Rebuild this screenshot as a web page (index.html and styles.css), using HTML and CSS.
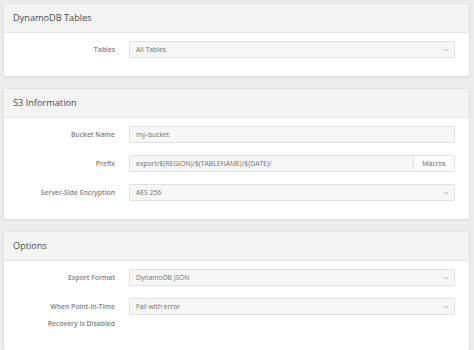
FILE: index.html
```html
<!DOCTYPE html>
<html>
<head>
<meta charset="utf-8">
<link rel="stylesheet" href="styles.css">
</head>
<body>
<div class="page">
  <section class="card">
    <div class="card-head">DynamoDB Tables</div>
    <div class="card-body">
      <div class="row">
        <label class="lbl">Tables</label>
        <div class="field select"><span>All Tables</span><svg class="chev" viewBox="0 0 8 5"><path d="M1 1l3 3 3-3" fill="none" stroke="#999" stroke-width="1"/></svg></div>
      </div>
    </div>
  </section>

  <section class="card">
    <div class="card-head">S3 Information</div>
    <div class="card-body">
      <div class="row">
        <label class="lbl">Bucket Name</label>
        <div class="field"><span>my-bucket</span></div>
      </div>
      <div class="row">
        <label class="lbl">Prefix</label>
        <div class="group">
          <div class="field grow"><span>export/$(REGION)/$(TABLENAME)/$(DATE)/</span></div>
          <div class="addon">Macros</div>
        </div>
      </div>
      <div class="row">
        <label class="lbl">Server-Side Encryption</label>
        <div class="field select"><span>AES 256</span><svg class="chev" viewBox="0 0 8 5"><path d="M1 1l3 3 3-3" fill="none" stroke="#999" stroke-width="1"/></svg></div>
      </div>
    </div>
  </section>

  <section class="card">
    <div class="card-head">Options</div>
    <div class="card-body">
      <div class="row">
        <label class="lbl">Export Format</label>
        <div class="field select"><span>DynamoDB JSON</span><svg class="chev" viewBox="0 0 8 5"><path d="M1 1l3 3 3-3" fill="none" stroke="#999" stroke-width="1"/></svg></div>
      </div>
      <div class="row">
        <label class="lbl">When Point-in-Time Recovery Is Disabled</label>
        <div class="field select"><span>Fail with error</span><svg class="chev" viewBox="0 0 8 5"><path d="M1 1l3 3 3-3" fill="none" stroke="#999" stroke-width="1"/></svg></div>
      </div>
    </div>
  </section>
</div>
</body>
</html>
```

FILE: styles.css
```css
html, body {
  margin: 0;
  padding: 0;
  background: #ececec;
  font-family: "Open Sans", "Liberation Sans", sans-serif;
}
.page {
  padding: 3px 4px 0 3px;
  display: flex;
  flex-direction: column;
  gap: 11px;
}
.card {
  background: #fff;
  border: 1px solid #e2e2e2;
  border-radius: 3px;
  box-shadow: 0 1px 2px rgba(0,0,0,0.06);
  overflow: hidden;
}
.card-head {
  background: #f4f4f4;
  border-bottom: 1px solid #e6e6e6;
  height: 28px;
  line-height: 28px;
  padding-left: 9px;
  font-size: 9.2px;
  color: #4a4a4a;
}
.card-body {
  padding: 8px 14px 6px 0;
}
.row {
  display: grid;
  grid-template-columns: 84px 1fr;
  column-gap: 14px;
  padding-left: 27px;
  margin-bottom: 12px;
}
.lbl {
  text-align: right;
  font-size: 6.8px;
  font-weight: 600;
  color: #808080;
  line-height: 17px;
}
.field {
  height: 15px;
  border: 1px solid #e0e0e0;
  border-radius: 2px;
  background: #f6f6f6;
  font-size: 6.8px;
  color: #707070;
  line-height: 15px;
  padding: 0 6px;
  display: flex;
  align-items: center;
  justify-content: space-between;
}
.chev {
  width: 6px;
  height: 4px;
  margin-right: -1px;
}
.group {
  display: flex;
}
.grow {
  flex: 1;
  border-radius: 2px 0 0 2px;
}
.addon {
  height: 15px;
  line-height: 15px;
  border: 1px solid #e0e0e0;
  border-left: none;
  border-radius: 0 2px 2px 0;
  background: #fbfbfb;
  font-size: 6.8px;
  color: #666;
  width: 40px;
  text-align: center;
}
```
